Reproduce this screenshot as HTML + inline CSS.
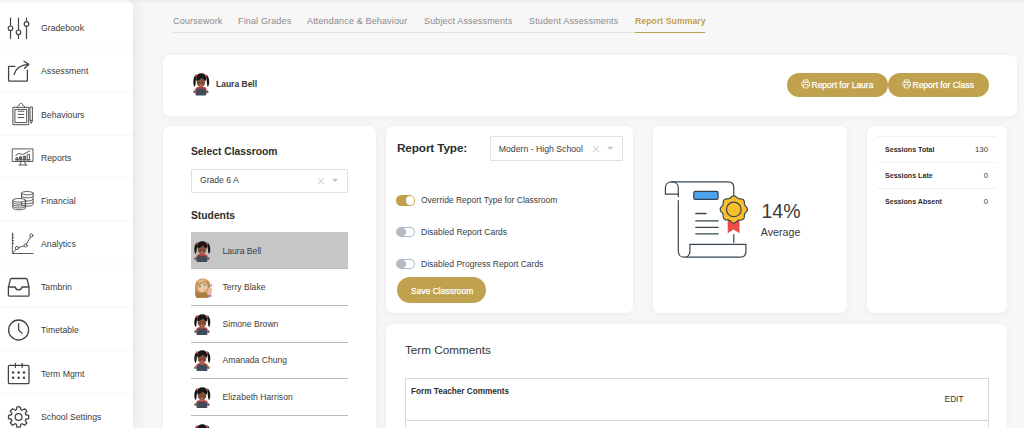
<!DOCTYPE html>
<html lang="en">
<head>
<meta charset="utf-8">
<title>Report Summary</title>
<style>
*{box-sizing:border-box;margin:0;padding:0}
html,body{width:1024px;height:428px;overflow:hidden;background:#f7f7f7;font-family:"Liberation Sans",sans-serif;color:#3a3a3a}
.abs{position:absolute}
.t{position:absolute;white-space:nowrap;line-height:1;transform:translateY(-50%)}
#side{position:absolute;left:0;top:0;width:133px;height:428px;background:#fff;border-top-right-radius:8px;box-shadow:0 0 18px rgba(0,0,0,.10)}
.sep{position:absolute;left:0;width:133px;height:2px;background:#fafafa}
.nv{left:41px;font-size:8.7px;color:#3c3c3c}
.card{position:absolute;background:#fff;border-radius:7px;box-shadow:0 1px 8px rgba(0,0,0,.055)}
.tab{font-size:9px;color:#8a8a8a;top:21px;letter-spacing:.15px}
.btn{position:absolute;background:#c0a14d;border-radius:20px}
.bt{color:#fff;font-size:8.5px;-webkit-text-stroke:.25px #fff}
.h{font-size:10.3px;font-weight:bold;color:#2e2e2e}
.ln{position:absolute;left:191px;width:156.5px;height:1px;background:#b9b9b9}
.nm{left:222.5px;font-size:8.6px;color:#3c3c3c}
.sel{position:absolute;border:1px solid #e0e0e0;border-radius:1px;background:#fff}
.tog{position:absolute;left:396.3px;width:19px;height:10.6px;border-radius:5.3px}
.tog i{position:absolute;top:1px;width:8.6px;height:8.6px;border-radius:50%;background:#fff}
.tog.on{background:#c0a14d}.tog.on i{right:1px}
.tog.off{background:#fff;box-shadow:inset 0 0 0 1px #adb4bd}.tog.off i{left:1px;top:1px;background:#b2bac6}
.lbl{left:421px;font-size:8.5px;color:#3c3c3c}
.ss{left:885px;font-size:7.1px;font-weight:bold;color:#2e2e2e}
.sv{right:36px;font-size:7.8px;color:#3c3c3c}
#topsh{position:absolute;left:0;top:0;width:1024px;height:4px;background:linear-gradient(rgba(0,0,0,.045),rgba(0,0,0,0));z-index:5}
#botsh{position:absolute;left:0;top:424px;width:100px;height:4px;background:linear-gradient(rgba(0,0,0,0),rgba(0,0,0,.07));-webkit-mask-image:linear-gradient(90deg,#000 50%,transparent);mask-image:linear-gradient(90deg,#000 50%,transparent);z-index:5}
</style>
</head>
<body>
<svg width="0" height="0" style="position:absolute">
<defs>
<g id="girl">
<path d="M3.100 1.400C1.300 2.600.2 5.800.3 9.200c.1 2.200.6 3.900 1.300 4.600.6-1 .9-2.600 1-4.600.1-2.500.9-5.500.5-7.800z" fill="#151515"/>
<path d="M12.900 1.400c1.800 1.200 2.900 4.400 2.800 7.800-.1 2.200-.6 3.900-1.300 4.600-.6-1-.9-2.600-1-4.600-.1-2.500-.9-5.500-.5-7.800z" fill="#151515"/>
<ellipse cx="8" cy="4.800" rx="5" ry="4.600" fill="#171717"/>
<ellipse cx="7.700" cy="9.200" rx="4.100" ry="5.100" fill="#85523a"/>
<path d="M3.200 8c2.400-.4 4.300-1.600 5.300-3.400 1 1.700 2.400 2.800 4 3.300C12.300 4 10.500 1.500 8 1.500S3.400 4 3.200 8z" fill="#171717"/>
<circle cx="2.900" cy="2.700" r="1.100" fill="#e23b3b"/><circle cx="12.900" cy="3" r="1.100" fill="#e23b3b"/>
<ellipse cx="6" cy="9.600" rx=".6" ry=".7" fill="#3a2218" opacity=".7"/><ellipse cx="9.400" cy="9.600" rx=".6" ry=".7" fill="#3a2218" opacity=".7"/>
<ellipse cx="7.700" cy="12.300" rx="1" ry=".6" fill="#e58f9a"/>
<path d="M2 17.200c0-2 1.300-3.200 3-3.200h5.400c1.700 0 3 1.200 3 3.200z" fill="#e8463f"/>
<ellipse cx="1.500" cy="18.800" rx="1.200" ry="1.500" fill="#85523a"/><ellipse cx="13.800" cy="18.800" rx="1.200" ry="1.500" fill="#85523a"/>
<path d="M2.500 16.400h1.700v-1.800h6.900v1.800h1.700v5.400c0 .4-.3.700-.7.700H3.200c-.4 0-.7-.3-.7-.7z" fill="#3f4b59"/>
<path d="M5.200 14.600h4.900v.9H5.200z" fill="#e8463f" opacity=".9"/>
</g>
<g id="blonde">
<path d="M.3 6C.8 3.600 3.500.6 7.300.4c3.500-.2 6.600 1.600 7.500 4.300.6 2 .4 4 .3 6-.1 3-.6 6-.9 9.100H1.300C.5 17.500-.1 15 0 12c0-2 0-4 .3-6z" fill="#c7985a"/>
<path d="M.1 13.500c3 1.500 8 2 12.500 1l.3 5.300H1.300C.6 18 .1 15.800.1 13.500z" fill="#ae7c44"/>
<path d="M2.400 4.300C3.800 2.300 5.800 1.200 8 1.200c1.500 0 2.800.4 3.800 1-2 .2-4 .8-5.600 1.800-1.400.8-2.600 1.300-3.800.3z" fill="#e3c088"/>
<ellipse cx="7.700" cy="9.400" rx="4.900" ry="4.500" transform="rotate(-22 7.700 9.400)" fill="#f3c9aa"/>
<path d="M2.600 8.600c.6-3 3.400-5.400 6.900-5.600 1.600 0 3 .6 4 1.700-2-.3-4 0-5.700 1-1.900 1.100-3.600 2.500-5.200 2.900z" fill="#cfa163"/>
<path d="M12.300 3.800c1.500.8 2.500 2.500 2.700 4.500.1 1.500-.3 3-1 4-.6-1.500-.8-3.500-.9-5-.1-1.300-.3-2.500-.8-3.500z" fill="#b98a4e"/>
<ellipse cx="14.600" cy="13.700" rx="2.300" ry="4.300" transform="rotate(10 14.600 13.700)" fill="#ecb5a2"/>
<path d="M15.700 5.800l1.100.4-.2 2.600-1.100-.3zM12.800 17l3.800.2.200 1.500-4.200-.1z" fill="#9d6f9e"/>
<ellipse cx="5" cy="8.700" rx="1" ry=".8" fill="#2f8a78"/><ellipse cx="9.500" cy="7" rx="1" ry=".8" fill="#2f8a78"/>
<path d="M7.300 11.900c.9.400 1.900.1 2.500-.6" stroke="#d77f80" stroke-width=".6" fill="none"/>
</g>
<g id="prn">
<rect x="2.300" y=".8" width="4.400" height="2.200" rx=".3"/>
<rect x=".8" y="3" width="7.400" height="3.600" rx=".6"/>
<rect x="2.300" y="5.200" width="4.400" height="3" rx=".3" fill="#c0a14d"/>
</g>
<g id="cert">
<path d="M678.300 194.200v-6.500c0-3.600-2.800-5.800-6.500-5.800s-6.400 2.400-6.400 5.800v6.500z"/>
<path d="M671.800 181.900h56.200c3.600 0 5.800 2.400 5.800 5.800v7"/>
<path d="M678.300 194.200v2.500M678.300 200.500v51c0 3.500 2.600 5.700 5.800 5.700s5.800-2.200 5.800-5.700v-7.200h56v7.200c0 3.400-2.300 5.700-5.800 5.700h-56"/>
<path d="M733.800 234.600v7.700"/>
<rect x="693.700" y="191.400" width="24.400" height="7.900" rx="1.600" fill="#4ba3ee"/>
<path d="M695.800 213.500h10.200M695.800 220.900h22.300M695.800 227.400h22.300M695.800 233.800h22.300" stroke-width="1.300"/>
<path d="M727.700 219.500h11.800v13.800l-5.900-3.800-5.900 3.800z" fill="#ee4b4b" stroke="none"/>
<path d="M744.70 213.92L744.49 214.67L744.41 215.53L744.36 216.46L744.23 217.41L743.93 218.29L743.42 219.02L742.69 219.53L741.81 219.83L740.86 219.96L739.92 220.01L739.07 220.09L738.32 220.30L737.63 220.69L736.97 221.23L736.28 221.86L735.52 222.44L734.68 222.85L733.80 223.00L732.92 222.85L732.08 222.44L731.32 221.86L730.63 221.23L729.97 220.69L729.28 220.30L728.53 220.09L727.67 220.01L726.74 219.96L725.79 219.83L724.91 219.53L724.18 219.02L723.67 218.29L723.37 217.41L723.24 216.46L723.19 215.53L723.11 214.67L722.90 213.92L722.51 213.23L721.97 212.57L721.34 211.88L720.76 211.12L720.35 210.28L720.20 209.40L720.35 208.52L720.76 207.68L721.34 206.92L721.97 206.23L722.51 205.57L722.90 204.88L723.11 204.13L723.19 203.28L723.24 202.34L723.37 201.39L723.67 200.51L724.18 199.78L724.91 199.27L725.79 198.97L726.74 198.84L727.67 198.79L728.53 198.71L729.28 198.50L729.97 198.11L730.63 197.57L731.32 196.94L732.08 196.36L732.92 195.95L733.80 195.80L734.68 195.95L735.52 196.36L736.28 196.94L736.97 197.57L737.63 198.11L738.32 198.50L739.07 198.71L739.92 198.79L740.86 198.84L741.81 198.97L742.69 199.27L743.42 199.78L743.93 200.51L744.23 201.39L744.36 202.34L744.41 203.27L744.49 204.13L744.70 204.88L745.09 205.57L745.63 206.23L746.26 206.92L746.84 207.68L747.25 208.52L747.40 209.40L747.25 210.28L746.84 211.12L746.26 211.88L745.63 212.57L745.09 213.23L744.70 213.92Z" fill="#fbbf2c"/>
<circle cx="733.800" cy="209.400" r="7.300" fill="#fbbf2c"/>
</g>
</defs>
</svg>
<div id="side">
<div class="sep" style="top:47.40px"></div><div class="sep" style="top:90.55px"></div><div class="sep" style="top:133.70px"></div><div class="sep" style="top:176.85px"></div><div class="sep" style="top:220.00px"></div><div class="sep" style="top:263.15px"></div><div class="sep" style="top:306.30px"></div><div class="sep" style="top:349.45px"></div><div class="sep" style="top:392.60px"></div>
<span class="t nv" style="top:28px">Gradebook</span>
<span class="t nv" style="top:71.2px">Assessment</span>
<span class="t nv" style="top:114.7px">Behaviours</span>
<span class="t nv" style="top:157.5px">Reports</span>
<span class="t nv" style="top:201px">Financial</span>
<span class="t nv" style="top:243.8px">Analytics</span>
<span class="t nv" style="top:286.9px">Tambrin</span>
<span class="t nv" style="top:330.1px">Timetable</span>
<span class="t nv" style="top:373.8px">Term Mgmt</span>
<span class="t nv" style="top:417.2px">School Settings</span>
<svg class="abs" style="left:0;top:0" width="132" height="428" viewBox="0 0 132 428" fill="none" stroke="#444" stroke-width="1.300" stroke-linecap="round" stroke-linejoin="round">
<!-- gradebook -->
<g stroke-width="1.200">
<path d="M10.5 18v7.6M10.5 31v7.5M18.5 18v11.6M18.5 35v3.5M26.5 18v3.3M26.5 26.7v11.8"/>
<circle cx="10.5" cy="28.3" r="2.3"/><circle cx="18.5" cy="32.3" r="2.3"/><circle cx="26.5" cy="24" r="2.3"/>
</g>
<!-- assessment -->
<path d="M14.9 66.3H9.2a.6.6 0 0 0-.6.6v13.6a.6.6 0 0 0 .6.6h17.6a.6.6 0 0 0 .6-.6V70.1"/>
<path d="M14.1 74.5c1.6-5.6 6.6-9.6 14-10.1M24 61.3l4.8 3.1-4.3 3.8"/>
<!-- behaviours -->
<g stroke-width=".95" stroke="#4a4a4a">
<rect x="13.300" y="107.300" width="15.400" height="17.400"/><rect x="15.300" y="109.400" width="11.400" height="13.200"/>
<path d="M17.200 107.300c0-1 .8-1.700 1.900-1.900.1-1.200.9-2 1.900-2s1.800.8 1.900 2c1.100.2 1.900.9 1.900 1.900"/>
<path d="M18.200 111.200h5.600M18.200 114.400h5.600M18.200 117.500h5.600"/>
<path d="M30.300 107h2.100v13.600l-1.050 2.900-1.050-2.900zM30.300 120.400h2.100"/>
</g>
<!-- reports -->
<g stroke-width=".9" stroke="#4a4a4a">
<rect x="12.600" y="148.900" width="20.400" height="12.600"/>
<path d="M21.300 161.500l-1.300 3.500M24.500 161.500l1.300 3.500M19 165h8M15.500 159.900h15"/>
<rect x="16.300" y="157.800" width="1.600" height="2.100" fill="#777"/><rect x="19.900" y="156.800" width="1.600" height="3.100" fill="#777"/><rect x="23.700" y="156.200" width="1.800" height="3.700" fill="#777"/><rect x="27.600" y="154.400" width="1.800" height="5.500"/>
<path d="M15.800 155.300l3.200-1.900 3.600 1.100 7-3.400"/>
</g>
<!-- financial -->
<g stroke-width=".9" stroke="#4a4a4a">
<ellipse cx="27.300" cy="193.200" rx="5.800" ry="1.700"/>
<path d="M21.500 193.200v11.200c0 1 2.600 1.800 5.800 1.800s5.800-.8 5.800-1.800V193.200"/>
<path d="M21.500 196c0 1 2.600 1.800 5.800 1.800s5.800-.8 5.800-1.800M25 200.800c.7.100 1.500.2 2.300.2 3.200 0 5.800-.8 5.800-1.800M26 203.600c.4 0 .8.100 1.300.1 3.200 0 5.800-.8 5.800-1.800"/>
<ellipse cx="19.200" cy="200.300" rx="6.400" ry="1.800" fill="#fff"/>
<path d="M12.800 200.300v7.500c0 1.100 2.900 2 6.400 2s6.400-.9 6.400-2v-7.500"/>
<path d="M12.800 202.200c0 1.100 2.900 2 6.400 2s6.400-.9 6.400-2M12.800 204.100c0 1.100 2.900 2 6.400 2s6.400-.9 6.400-2M12.800 206c0 1.100 2.900 2 6.400 2s6.400-.9 6.400-2"/>
</g>
<!-- analytics -->
<g stroke-width=".9" stroke="#4a4a4a">
<path d="M12.400 233v20.500h20.700M12.400 235h1.200M12.400 237.700h1.200M12.400 240.500h1.200M12.400 243.300h1.200"/>
<path d="M13 252.800l3-3.500M18.500 247.500l5.500-1.600M26.500 244l4-7"/>
<circle cx="17" cy="248" r="1.600"/><circle cx="25.600" cy="245.500" r="1.600"/><circle cx="31.300" cy="235.500" r="1.600"/>
</g>
<!-- tambrin -->
<path d="M8.400 287l2-7.600a1.200 1.200 0 0 1 1.100-.9h14.600a1.200 1.200 0 0 1 1.100.9l1.800 7.600v8.200a.9.900 0 0 1-.9.900H9.300a.9.900 0 0 1-.9-.9zM8.400 287h6.800c.4 1.800 1.600 2.900 3.400 2.900s3-1.100 3.400-2.900H29"/>
<!-- timetable -->
<circle cx="18.600" cy="330" r="10"/><path d="M18.600 323.700v6.300l3.500 3.400"/>
<!-- term -->
<rect x="8.400" y="365.400" width="20.600" height="18.300" rx="1.200"/><path d="M15.400 363.300v4M22.100 363.300v4"/>
<g fill="#444" stroke="none"><circle cx="13.100" cy="372.400" r="1.250"/><circle cx="18.600" cy="372.400" r="1.250"/><circle cx="24" cy="372.400" r="1.250"/><circle cx="13.100" cy="377.800" r="1.250"/><circle cx="18.600" cy="377.800" r="1.250"/><circle cx="24" cy="377.800" r="1.250"/></g>
<!-- settings -->
<circle cx="18.600" cy="417" r="3.400" stroke-width="1.300"/>
<path stroke-width="1.300" d="M16.35 409.74 L16.97 406.93 L20.23 406.93 L20.85 409.74 L22.15 410.28 L24.57 408.73 L26.87 411.03 L25.32 413.45 L25.86 414.75 L28.67 415.37 L28.67 418.63 L25.86 419.25 L25.32 420.55 L26.87 422.97 L24.57 425.27 L22.15 423.72 L20.85 424.26 L20.23 427.07 L16.97 427.07 L16.35 424.26 L15.05 423.72 L12.63 425.27 L10.33 422.97 L11.88 420.55 L11.34 419.25 L8.53 418.63 L8.53 415.37 L11.34 414.75 L11.88 413.45 L10.33 411.03 L12.63 408.73 L15.05 410.28Z"/>
</svg>
</div>
<div id="main">
<!-- tabs -->
<div class="abs" style="left:172px;top:32px;width:534px;height:1px;background:#e3e3e3"></div>
<div class="abs" style="left:635px;top:31.5px;width:70px;height:1.5px;background:#c0a14d"></div>
<span class="t tab" style="left:173px">Coursework</span>
<span class="t tab" style="left:238px">Final Grades</span>
<span class="t tab" style="left:307px">Attendance &amp; Behaviour</span>
<span class="t tab" style="left:424px">Subject Assessments</span>
<span class="t tab" style="left:529px">Student Assessments</span>
<span class="t tab" style="left:635px;color:#c0a14d;font-weight:bold;font-size:8.6px;letter-spacing:.1px">Report Summary</span>
<!-- header card -->
<div class="card" style="left:163px;top:54.5px;width:854px;height:61px"></div>
<svg class="abs av" style="left:193.3px;top:73.2px" width="16.500" height="22.500" viewBox="0 0 16 22.500" preserveAspectRatio="none"><use href="#girl"/></svg>
<span class="t" style="left:216px;top:84px;font-size:8.5px;font-weight:bold;color:#383838">Laura Bell</span>
<div class="btn" style="left:787.2px;top:73px;width:100.6px;height:23.5px"></div>
<div class="btn" style="left:888.3px;top:73px;width:100.3px;height:23.5px"></div>
<svg class="abs" style="left:800.8px;top:79px" width="9.400" height="9.800" viewBox="0 0 9 9" preserveAspectRatio="none" fill="none" stroke="#fff" stroke-width=".8"><use href="#prn"/></svg>
<svg class="abs" style="left:901.8px;top:79px" width="9.400" height="9.800" viewBox="0 0 9 9" preserveAspectRatio="none" fill="none" stroke="#fff" stroke-width=".8"><use href="#prn"/></svg>
<span class="t bt" style="left:811.5px;top:85px">Report for Laura</span>
<span class="t bt" style="left:912.5px;top:85px">Report for Class</span>
<!-- left card -->
<div class="card" style="left:163px;top:126px;width:212.5px;height:320px"></div>
<span class="t h" style="left:191px;top:152px">Select Classroom</span>
<div class="sel" style="left:191px;top:169px;width:157px;height:24px"></div>
<span class="t" style="left:200px;top:180.4px;font-size:8.6px;color:#3c3c3c">Grade 6 A</span>
<svg class="abs" style="left:317px;top:177px" width="26" height="8" viewBox="0 0 26 8"><path d="M1 1.300l5.700 5.700M6.700 1.300l-5.700 5.700" stroke="#c6c6c6" stroke-width="1" fill="none"/><path d="M15 1.700h6.200l-3.100 3.200z" fill="#c4c4c4"/></svg>
<span class="t h" style="left:191px;top:216px">Students</span>
<div class="abs" style="left:191px;top:232.2px;width:156.5px;height:36.8px;background:#c6c6c6"></div>
<div class="ln" style="top:268.2px"></div>
<div class="ln" style="top:304.8px"></div>
<div class="ln" style="top:341.5px"></div>
<div class="ln" style="top:378.1px"></div>
<div class="ln" style="top:414.8px"></div>
<svg class="abs av" style="left:194.2px;top:240.5px" width="16.600" height="21.200" viewBox="0 0 16 22.500" preserveAspectRatio="none"><use href="#girl"/></svg>
<svg class="abs av" style="left:194.8px;top:277.6px" width="17" height="20" viewBox="0 0 17 20"><use href="#blonde"/></svg>
<svg class="abs av" style="left:194.2px;top:313.7px" width="16.600" height="21.200" viewBox="0 0 16 22.500" preserveAspectRatio="none"><use href="#girl"/></svg>
<svg class="abs av" style="left:194.2px;top:350.3px" width="16.600" height="21.200" viewBox="0 0 16 22.500" preserveAspectRatio="none"><use href="#girl"/></svg>
<svg class="abs av" style="left:194.2px;top:387px" width="16.600" height="21.200" viewBox="0 0 16 22.500" preserveAspectRatio="none"><use href="#girl"/></svg>
<svg class="abs av" style="left:194.2px;top:423.6px" width="16.600" height="21.200" viewBox="0 0 16 22.500" preserveAspectRatio="none"><use href="#girl"/></svg>
<span class="t nm" style="top:250.5px">Laura Bell</span>
<span class="t nm" style="top:287px">Terry Blake</span>
<span class="t nm" style="top:323.5px">Simone Brown</span>
<span class="t nm" style="top:360.2px">Amanada Chung</span>
<span class="t nm" style="top:396.8px">Elizabeth Harrison</span>
<!-- report type card -->
<div class="card" style="left:385.5px;top:126px;width:247px;height:186.5px"></div>
<span class="t" style="left:397px;top:148.9px;font-size:11.8px;letter-spacing:-.15px;font-weight:bold;color:#2e2e2e">Report Type:</span>
<div class="sel" style="left:490px;top:136px;width:133px;height:25px"></div>
<span class="t" style="left:498.8px;top:148.6px;font-size:8.7px;color:#3c3c3c">Modern - High School</span>
<svg class="abs" style="left:592px;top:145px" width="26" height="8" viewBox="0 0 26 8"><path d="M1 1.300l5.700 5.700M6.700 1.300l-5.700 5.700" stroke="#c6c6c6" stroke-width="1" fill="none"/><path d="M15 1.700h6.200l-3.100 3.200z" fill="#c4c4c4"/></svg>
<div class="tog on" style="top:195.1px"><i></i></div>
<div class="tog off" style="top:226.9px"><i></i></div>
<div class="tog off" style="top:258.9px"><i></i></div>
<span class="t lbl" style="top:200px">Override Report Type for Classroom</span>
<span class="t lbl" style="top:232.3px">Disabled Report Cards</span>
<span class="t lbl" style="top:264.2px">Disabled Progress Report Cards</span>
<div class="btn" style="left:396.8px;top:277.3px;width:89.2px;height:25.5px"></div>
<span class="t bt" style="left:411px;top:290.5px">Save Classroom</span>
<!-- average card -->
<div class="card" style="left:653px;top:126px;width:194px;height:186.5px"></div>
<svg class="abs" style="left:660px;top:175px" width="100" height="90" viewBox="660 175 100 90" fill="none" stroke="#36454f" stroke-width="1.200" stroke-linecap="round" stroke-linejoin="round">
<use href="#cert"/>
</svg>
<span class="t" style="left:761.5px;top:212.2px;font-size:19.5px;color:#3a3a3a">14%</span>
<span class="t" style="left:760.8px;top:232px;font-size:10.7px;color:#3a3a3a">Average</span>
<!-- sessions card -->
<div class="card" style="left:867px;top:126px;width:140px;height:186.5px"></div>
<div class="abs" style="left:877px;top:136.2px;width:119px;height:1px;background:#f1f1f1"></div>
<div class="abs" style="left:877px;top:162.2px;width:119px;height:1px;background:#f1f1f1"></div>
<div class="abs" style="left:877px;top:188px;width:119px;height:1px;background:#f1f1f1"></div>
<span class="t ss" style="top:150.9px">Sessions Total</span>
<span class="t ss" style="top:176.5px">Sessions Late</span>
<span class="t ss" style="top:202.6px">Sessions Absent</span>
<span class="t sv" style="top:149.9px">130</span>
<span class="t sv" style="top:175.5px">0</span>
<span class="t sv" style="top:201.9px">0</span>
<!-- term comments -->
<div class="card" style="left:386px;top:324px;width:621px;height:130px"></div>
<span class="t" style="left:405px;top:349.7px;font-size:11.7px;color:#333">Term Comments</span>
<div class="abs" style="left:405px;top:378px;width:583.5px;height:60px;border:1px solid #d8d8d8;background:#fff"></div>
<div class="abs" style="left:405px;top:420px;width:583.5px;height:1px;background:#d8d8d8"></div>
<span class="t" style="left:411px;top:392.3px;font-size:8.2px;font-weight:bold;color:#2e2e2e">Form Teacher Comments</span>
<span class="t" style="left:944.6px;top:398.7px;font-size:8.3px;color:#333">EDIT</span>
</div>
<div id="topsh"></div>
</body>
</html>
